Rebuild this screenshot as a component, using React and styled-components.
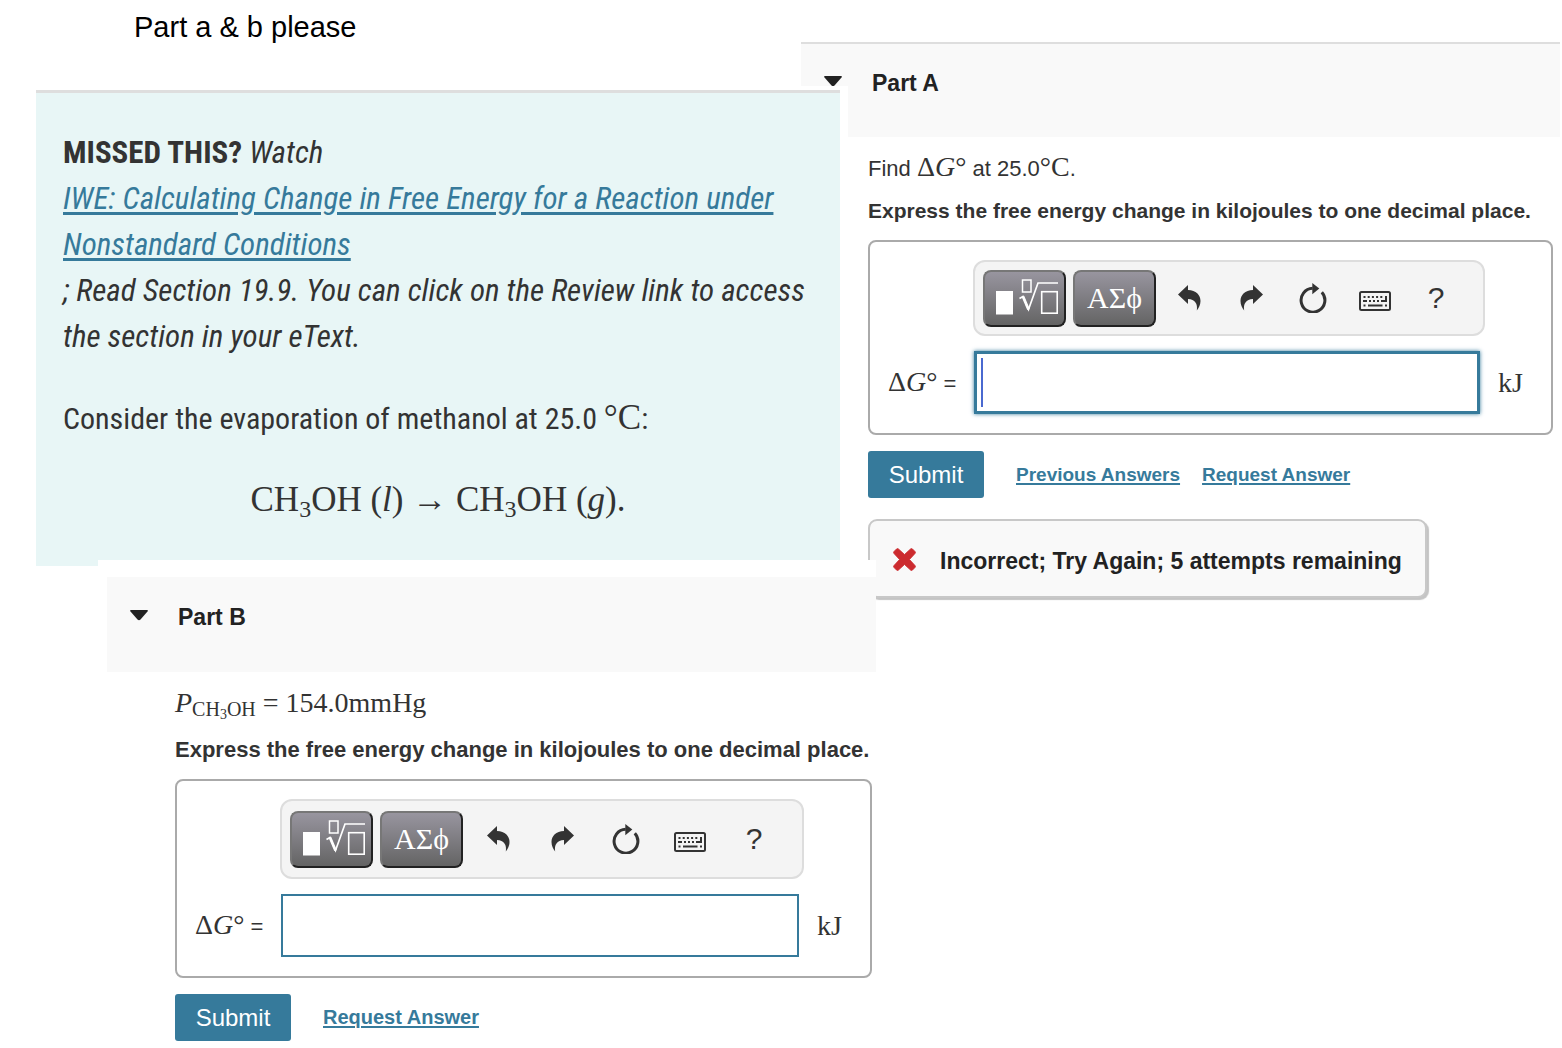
import React from "react";
import styled, { createGlobalStyle } from "styled-components";

const GlobalStyle = createGlobalStyle`
  * {
    box-sizing: border-box;
  }

  body {
    margin: 0;
    background: #fff;
    color: #333;
    font-family: "Liberation Sans", Arial, sans-serif;
    font-size: 22px;
    overflow-x: hidden;
  }

  p, h1, h2 {
    margin: 0;
  }
`;

const Heading = styled.h1`
  padding: 10px 0 0 134px;
  height: 42px;
  font-size: 29px;
  font-weight: 400;
  line-height: 34px;
  color: #000;
`;

const Board = styled.main`
  display: flex;
  align-items: flex-start;
`;

const LeftColumn = styled.div`
  position: relative;
  z-index: 1;
  flex: 848 1 0;
  min-width: 0;
  padding-top: 44px;
`;

const RightColumn = styled.div`
  flex: 714 1 47px;
  min-width: 0;
  margin-left: -47px;
`;

const Frame = styled.div`
  margin-left: 28px;
  padding: 4px 8px 0;
  background: #fff;
`;

const Intro = styled.section`
  padding: 37px 27px 43px;
  border-top: 3px solid #dedede;
  background: #e8f6f6;
  font-family: "Roboto Condensed", "Liberation Sans", sans-serif;
  font-size: 31px;
  line-height: 46px;
`;

const Hint = styled.p`
  margin-right: -20px;
  font-style: italic;

  strong {
    font-style: normal;
  }
`;

const HintLink = styled.a`
  display: block;
  color: #367a9b;
  text-decoration: underline;
  text-decoration-thickness: 3px;
  text-underline-offset: 3px;
`;

const Question = styled.p`
  margin-top: 36px;
  font-size: 30px;
`;

const Equation = styled.p`
  margin-top: 35px;
  font-family: "Liberation Serif", serif;
  font-size: 35px;
  text-align: center;
`;

const Serif = styled.span`
  font-family: "Liberation Serif", serif;
  font-size: ${({ $size }) => $size || 28}px;
  line-height: 0;
`;

const Sub = styled.sub`
  font-size: ${({ $size }) => $size}px;
  line-height: 0;
  vertical-align: ${({ $drop }) => -$drop}px;
`;

const PartB = styled.section`
  margin: -6px -28px 0 98px;
  padding: 17px 0 7px 9px;
  background: #fff;
`;

const PartHeader = styled.header`
  display: flex;
  align-items: flex-start;
  gap: 30px;
  height: 95px;
  padding: 26px 0 0 23px;
  background: #f9f9f9;
  color: #222;

  ${({ $line }) =>
    $line &&
    `
    margin-right: 2px;
    padding-top: 25px;
    border-top: 2px solid #dedede;
  `}

  svg {
    margin-top: 7px;
  }

  h2 {
    font-size: 23px;
    line-height: 28px;
  }
`;

const PartBody = styled.div`
  padding: ${({ $pad }) => $pad};
`;

const Given = styled.p`
  line-height: 32px;
`;

const Instruction = styled.p`
  margin-top: ${({ $gap }) => $gap}px;
  font-size: ${({ $size }) => $size}px;
  font-weight: 700;
  line-height: 28px;
  white-space: nowrap;
`;

const AnswerBox = styled.div`
  display: grid;
  grid-template-columns: 85px 1fr 66px;
  row-gap: 15px;
  align-items: center;
  margin-top: 15px;
  padding: 18px 0 19px 18px;
  border: 2px solid #aaa;
  border-radius: 8px;
`;

const Toolbar = styled.div`
  grid-column: 2;
  display: flex;
  align-items: center;
  height: ${({ $height }) => $height}px;
  padding: 0 8px;
  border: 2px solid #ddd;
  border-radius: 12px;
  background: #f4f4f4;
`;

const PaletteButton = styled.button`
  flex: none;
  width: 83px;
  height: 57px;
  margin-right: 7px;
  padding: 0;
  border: 2px solid;
  border-color: #777 #222 #222 #777;
  border-radius: 8px;
  background: linear-gradient(#98959f, #646464);
  color: #fff;
  font-family: "Liberation Serif", serif;
  font-size: 30px;

  svg {
    display: block;
  }
`;

const Tools = styled.div`
  display: flex;
  flex: 1;
  margin: 0 8px 0 -4px;
`;

const IconButton = styled.button`
  display: flex;
  flex: 1;
  align-items: center;
  justify-content: center;
  height: 57px;
  padding: 0;
  border: none;
  background: none;
  color: #333;
  font-family: inherit;
  font-size: 30px;
`;

const AnswerLabel = styled.label`
  grid-column: 1;
  padding-top: 3px;
  white-space: nowrap;
`;

const AnswerInput = styled.input`
  width: calc(100% - 6px);
  height: 63px;
  margin-left: 1px;
  padding: 0 8px;
  border: 2px solid #367a9b;
  border-radius: 0;
  outline: none;
  font-size: 28px;
  background: #fff;

  ${({ $active }) =>
    $active &&
    `
    box-shadow: inset 0 0 0 1px #367a9b, 0 0 4px #367a9b;
    background: linear-gradient(#4a69d0, #4a69d0) 5px 5px / 2px 49px no-repeat #fff;
  `}
`;

const Unit = styled(Serif)`
  margin-left: 13px;
`;

const Actions = styled.div`
  display: flex;
  align-items: center;
  margin-top: 16px;
`;

const Submit = styled.button`
  width: 116px;
  height: 47px;
  margin-right: 32px;
  padding: 0;
  border: none;
  border-radius: 3px;
  background: #367a9b;
  color: #fff;
  font-family: inherit;
  font-size: 24px;
`;

const ActionLink = styled.a`
  margin-right: 22px;
  color: #367a9b;
  font-size: ${({ $size }) => $size}px;
  font-weight: 700;
  text-decoration: underline;
  text-decoration-thickness: 2px;
  text-underline-offset: 2px;
`;

const Feedback = styled.div`
  display: inline-flex;
  align-items: center;
  gap: 24px;
  height: 79px;
  margin-top: 21px;
  padding: 6px 23px 0 23px;
  border: 2px solid #c8c8c8;
  border-radius: 9px;
  box-shadow: 2px 2px 1px #c4c4c4;
  background: #f9f9f9;
  color: #222;
  font-size: 23px;
  font-weight: 700;
  white-space: nowrap;
`;

const Caret = () => (
  <svg width="18" height="11" viewBox="0 0 18 11" fill="#222">
    <path d="M1 0H17Q18.500 0 17.500 1.500L10.500 9.500Q9 11 7.500 9.500L.5 1.500Q-.5 0 1 0Z" />
  </svg>
);

const RootIcon = () => (
  <svg width="79" height="53" viewBox="2 3 79 53" fill="none" stroke="#fff">
    <rect x="13" y="22" width="17" height="23.500" fill="#fff" stroke="none" />
    <rect x="39.500" y="11" width="8.500" height="12" strokeWidth="1.500" />
    <path d="M36.500 29.500L40 27.500L45.500 40.500L55 14H75" strokeWidth="1.700" />
    <path d="M40 27.500L45.500 40.500" strokeWidth="2.800" />
    <rect x="58.700" y="22.700" width="15.500" height="21.500" strokeWidth="1.600" />
  </svg>
);

const UndoIcon = ({ flip }) => (
  <svg width="23" height="26" viewBox="0 0 23 26" fill="#333">
    <path
      transform={flip ? "matrix(-1 0 0 1 23 0)" : undefined}
      d="M0 9.500L10 0V5C18 5.200 22.500 10 22.500 16C22.500 20 20.800 23 18.800 25.500C20 19 17 14.300 10 14V19Z"
    />
  </svg>
);

const ResetIcon = () => (
  <svg width="28" height="30" viewBox="0 0 28 30" fill="none">
    <path d="M22.800 9.200A11.900 11.900 0 1 1 13.700 5.300" stroke="#333" strokeWidth="3" />
    <path d="M13.300 0L20.300 5.600L13.300 11.300Z" fill="#333" />
  </svg>
);

const KeyboardIcon = () => (
  <svg width="32" height="26" viewBox="0 -6 32 26" fill="none" stroke="#333">
    <rect x="1" y="1" width="30" height="18" rx="1.500" strokeWidth="2" />
    <path d="M4.500 6H25" strokeWidth="2" strokeDasharray="2 2.200" />
    <path d="M4 10H8M10 10H12M14 10H16M18 10H20M22 10H28M27 5V10.500" strokeWidth="2" />
    <path d="M4.500 14.500H6.500M9 14.500H23.500M26 14.500H28" strokeWidth="2" />
  </svg>
);

const WrongIcon = () => (
  <svg width="23" height="28" viewBox="0 0 23 28">
    <path
      d="M5.500 1L11.500 6.500L17.500 1Q18.500 0 19.500 1L22 3.500Q23 4.500 22 5.500L16.500 11.500L22 17.500Q23 18.500 22 19.500L19.500 22Q18.500 23 17.500 22L11.500 16.500L5.500 22Q4.500 23 3.500 22L1 19.500Q0 18.500 1 17.500L6.500 11.500L1 5.500Q0 4.500 1 3.500L3.500 1Q4.500 0 5.500 1Z"
      fill="#cc2b2f"
      stroke="#cc2b2f"
      strokeWidth=".8"
    />
  </svg>
);

const DeltaG = () => (
  <Serif>
    Δ<i>G</i>°
  </Serif>
);

const AnswerEditor = ({ id, active, toolbarHeight }) => (
  <AnswerBox>
    <Toolbar $height={toolbarHeight}>
      <PaletteButton type="button" aria-label="Templates">
        <RootIcon />
      </PaletteButton>
      <PaletteButton type="button">ΑΣϕ</PaletteButton>
      <Tools>
        <IconButton type="button" aria-label="Undo">
          <UndoIcon />
        </IconButton>
        <IconButton type="button" aria-label="Redo">
          <UndoIcon flip />
        </IconButton>
        <IconButton type="button" aria-label="Reset">
          <ResetIcon />
        </IconButton>
        <IconButton type="button" aria-label="Keyboard">
          <KeyboardIcon />
        </IconButton>
        <IconButton type="button">?</IconButton>
      </Tools>
    </Toolbar>
    <AnswerLabel htmlFor={id}>
      <DeltaG /> =
    </AnswerLabel>
    <AnswerInput id={id} type="text" $active={active} />
    <Unit>kJ</Unit>
  </AnswerBox>
);

const App = () => {
  return (
    <>
      <GlobalStyle />
      <Heading>Part a &amp; b please</Heading>
      <Board>
        <LeftColumn>
          <Frame>
            <Intro>
              <Hint>
                <strong>MISSED THIS?</strong> Watch
                <HintLink href="#iwe">
                  IWE: Calculating Change in Free Energy for a Reaction under Nonstandard Conditions
                </HintLink>
                ; Read Section 19.9. You can click on the Review link to access the section in your eText.
              </Hint>
              <Question>
                Consider the evaporation of methanol at 25.0 <Serif $size={35}>°C</Serif>:
              </Question>
              <Equation>
                CH<Sub $size={24} $drop={6}>3</Sub>OH (<i>l</i>) → CH<Sub $size={24} $drop={6}>3</Sub>OH (<i>g</i>).
              </Equation>
            </Intro>
          </Frame>
          <PartB>
            <PartHeader>
              <Caret />
              <h2>Part B</h2>
            </PartHeader>
            <PartBody $pad="17px 4px 0 68px">
              <Given>
                <Serif>
                  <i>P</i>
                  <Sub $size={20} $drop={4}>
                    CH<Sub $size={14} $drop={3}>3</Sub>OH
                  </Sub>{" "}
                  = 154.0mmHg
                </Serif>
              </Given>
              <Instruction $gap={15} $size={22}>
                Express the free energy change in kilojoules to one decimal place.
              </Instruction>
              <AnswerEditor id="answer-b" toolbarHeight={80} />
              <Actions>
                <Submit type="button">Submit</Submit>
                <ActionLink href="#request-b" $size={20}>Request Answer</ActionLink>
              </Actions>
            </PartBody>
          </PartB>
        </LeftColumn>
        <RightColumn>
          <PartHeader $line>
            <Caret />
            <h2>Part A</h2>
          </PartHeader>
          <PartBody $pad="16px 9px 0 67px">
            <Given>
              Find <DeltaG /> at 25.0<Serif>°C</Serif>.
            </Given>
            <Instruction $gap={12} $size={21}>
              Express the free energy change in kilojoules to one decimal place.
            </Instruction>
            <AnswerEditor id="answer-a" active toolbarHeight={76} />
            <Actions>
              <Submit type="button">Submit</Submit>
              <ActionLink href="#previous-a" $size={19}>Previous Answers</ActionLink>
              <ActionLink href="#request-a" $size={19}>Request Answer</ActionLink>
            </Actions>
            <Feedback>
              <WrongIcon />
              Incorrect; Try Again; 5 attempts remaining
            </Feedback>
          </PartBody>
        </RightColumn>
      </Board>
    </>
  );
};

export default App;
